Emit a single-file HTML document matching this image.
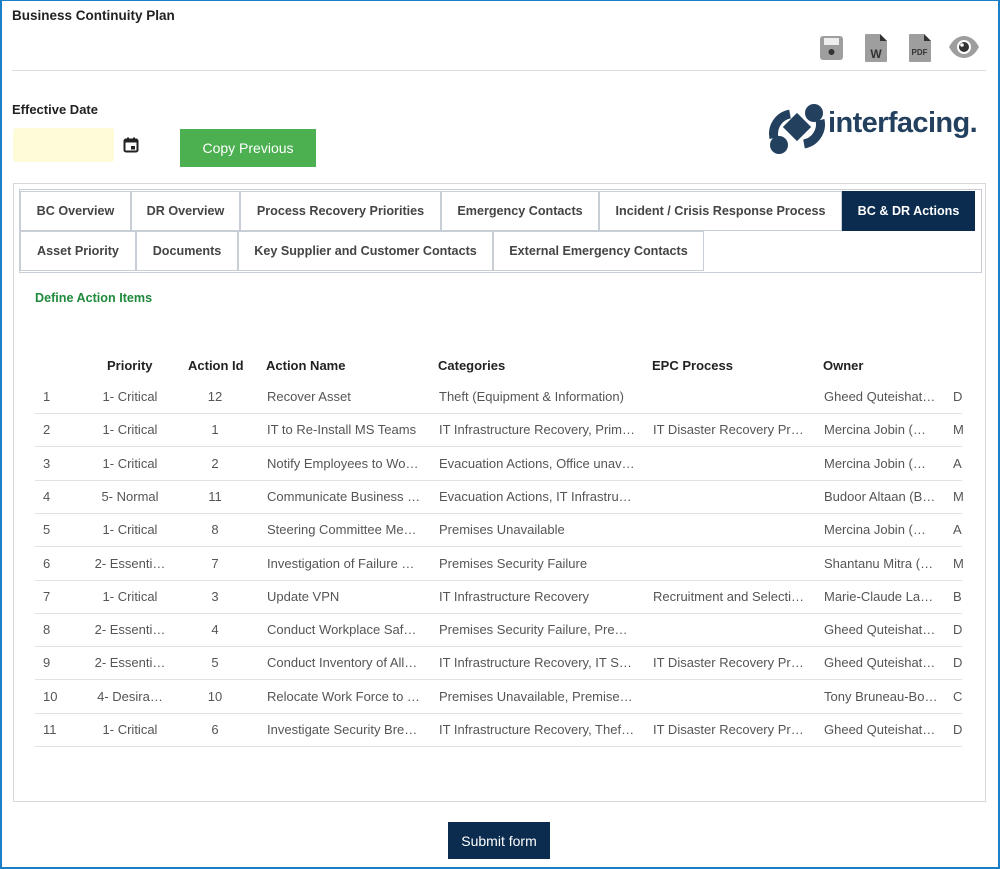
<!DOCTYPE html>
<html><head><style>
*{box-sizing:border-box;margin:0;padding:0}
body{width:1000px;height:869px;background:#fff;font-family:"Liberation Sans",sans-serif;position:relative;overflow:hidden}
.frame{position:absolute;left:0;top:0;width:1000px;height:869px;border:2px solid #1a7fc7;border-top:1px solid #1a7fc7}
.a{position:absolute}
.title{left:12px;top:8px;font-size:13.5px;font-weight:bold;color:#222}
.hr{left:12px;top:70px;width:974px;height:1px;background:#ddd}
.tab{position:absolute;height:40px;border:1px solid #c8ced6;font-size:12.6px;font-weight:bold;color:#444;display:flex;align-items:center;justify-content:center;background:#fff;white-space:nowrap}
.tab.act{background:#0b2c4f;color:#fff;border-color:#0b2c4f}
.t{position:absolute;font-size:13px;color:#555;white-space:nowrap}
.h{position:absolute;font-size:13px;color:#222;font-weight:bold;white-space:nowrap}
.line{position:absolute;left:35px;width:927px;height:1px;background:#e2e2e2}
</style></head><body>
<div class="frame"></div>
<div class="a title">Business Continuity Plan</div>
<svg class="a" style="left:819px;top:34px" width="26" height="28" viewBox="0 0 26 28"><rect x="1" y="2" width="23" height="24" rx="3" fill="#9e9e9e"/><rect x="5" y="4" width="15" height="7" fill="#eee"/><circle cx="12.5" cy="18" r="3" fill="#333"/></svg>
<svg class="a" style="left:864px;top:33px" width="24" height="30" viewBox="0 0 24 30"><path d="M2 1h14l7 7v20a1 1 0 0 1-1 1H2a1 1 0 0 1-1-1V2a1 1 0 0 1 1-1z" fill="#9e9e9e"/><path d="M16 1v7h7z" fill="#333"/><text x="12" y="25" font-size="12" font-weight="bold" text-anchor="middle" fill="#333" font-family="Liberation Sans">W</text></svg>
<svg class="a" style="left:908px;top:33px" width="24" height="30" viewBox="0 0 24 30"><path d="M2 1h14l7 7v20a1 1 0 0 1-1 1H2a1 1 0 0 1-1-1V2a1 1 0 0 1 1-1z" fill="#9e9e9e"/><path d="M16 1v7h7z" fill="#333"/><text x="11.5" y="22" font-size="8" font-weight="bold" text-anchor="middle" fill="#333" font-family="Liberation Sans">PDF</text></svg>
<svg class="a" style="left:948px;top:34px" width="32" height="26" viewBox="0 0 32 26"><path d="M1 13C5 5 11 2 16 2s11 3 15 11c-4 8-10 11-15 11S5 21 1 13z" fill="#9e9e9e"/><circle cx="16" cy="13" r="7" fill="#fff"/><circle cx="16" cy="13" r="5" fill="#333"/><circle cx="14" cy="11" r="1.8" fill="#fff"/></svg>
<div class="a hr"></div>
<div class="a" style="left:12px;top:102px;font-size:13px;font-weight:bold;color:#222">Effective Date</div>
<div class="a" style="left:13px;top:128px;width:101px;height:34px;background:#fefbd8;border-radius:3px"></div>
<svg class="a" style="left:123px;top:137px" width="16" height="16" viewBox="0 0 16 16"><rect x="1.5" y="2.5" width="13" height="12" rx="1.5" fill="none" stroke="#222" stroke-width="2"/><rect x="1.5" y="2.5" width="13" height="3" fill="#222"/><rect x="8" y="9" width="4" height="3.5" fill="#222"/><rect x="4" y="0.5" width="2" height="3" fill="#222"/><rect x="10" y="0.5" width="2" height="3" fill="#222"/></svg>
<div class="a" style="left:180px;top:129px;width:136px;height:38px;background:#4caf50;color:#fff;font-size:14px;display:flex;align-items:center;justify-content:center">Copy Previous</div>
<svg class="a" style="left:768px;top:100px" width="60" height="56" viewBox="0 0 60 56"><path d="M22 14 A20 20 0 0 0 6 38" fill="none" stroke="#23415f" stroke-width="9"/><path d="M36 44 A20 20 0 0 0 52 20" fill="none" stroke="#23415f" stroke-width="9"/><rect x="19" y="17" width="20" height="20" transform="rotate(45 29 27)" fill="#23415f"/><circle cx="46" cy="13" r="9" fill="#23415f"/><circle cx="11" cy="45" r="9" fill="#23415f"/></svg>
<div class="a" style="left:828px;top:107px;font-size:29px;font-weight:bold;color:#23415f;letter-spacing:-0.6px">interfacing.</div>
<div class="a" style="left:13px;top:183px;width:973px;height:619px;border:1px solid #d4d8dd"></div>
<div class="a" style="left:19px;top:189px;width:963px;height:84px;border:1px solid #c8ced6"></div>
<div class="tab" style="left:20px;top:191px;width:111px">BC Overview</div>
<div class="tab" style="left:131px;top:191px;width:109px">DR Overview</div>
<div class="tab" style="left:240px;top:191px;width:201px">Process Recovery Priorities</div>
<div class="tab" style="left:441px;top:191px;width:158px">Emergency Contacts</div>
<div class="tab" style="left:599px;top:191px;width:243px">Incident / Crisis Response Process</div>
<div class="tab act" style="left:842px;top:191px;width:133px">BC &amp; DR Actions</div>
<div class="tab" style="left:20px;top:231px;width:116px">Asset Priority</div>
<div class="tab" style="left:136px;top:231px;width:102px">Documents</div>
<div class="tab" style="left:238px;top:231px;width:255px">Key Supplier and Customer Contacts</div>
<div class="tab" style="left:493px;top:231px;width:211px">External Emergency Contacts</div>
<div class="a" style="left:35px;top:291px;font-size:12.6px;font-weight:bold;color:#1e8a3c">Define Action Items</div>
<div class="h" style="left:107px;top:358px">Priority</div>
<div class="h" style="left:188px;top:358px">Action Id</div>
<div class="h" style="left:266px;top:358px">Action Name</div>
<div class="h" style="left:438px;top:358px">Categories</div>
<div class="h" style="left:652px;top:358px">EPC Process</div>
<div class="h" style="left:823px;top:358px">Owner</div>
<div id="rows"></div>
<script>
var d=[["1","1- Critical","12","Recover Asset","Theft (Equipment & Information)","","Gheed Quteishat…","D"],
["2","1- Critical","1","IT to Re-Install MS Teams","IT Infrastructure Recovery, Prim…","IT Disaster Recovery Pr…","Mercina Jobin (…","M"],
["3","1- Critical","2","Notify Employees to Wo…","Evacuation Actions, Office unav…","","Mercina Jobin (…","A"],
["4","5- Normal","11","Communicate Business …","Evacuation Actions, IT Infrastru…","","Budoor Altaan (B…","M"],
["5","1- Critical","8","Steering Committee Me…","Premises Unavailable","","Mercina Jobin (…","A"],
["6","2- Essenti…","7","Investigation of Failure …","Premises Security Failure","","Shantanu Mitra (…","M"],
["7","1- Critical","3","Update VPN","IT Infrastructure Recovery","Recruitment and Selecti…","Marie-Claude La…","B"],
["8","2- Essenti…","4","Conduct Workplace Saf…","Premises Security Failure, Pre…","","Gheed Quteishat…","D"],
["9","2- Essenti…","5","Conduct Inventory of All…","IT Infrastructure Recovery, IT S…","IT Disaster Recovery Pr…","Gheed Quteishat…","D"],
["10","4- Desira…","10","Relocate Work Force to …","Premises Unavailable, Premise…","","Tony Bruneau-Bo…","C"],
["11","1- Critical","6","Investigate Security Bre…","IT Infrastructure Recovery, Thef…","IT Disaster Recovery Pr…","Gheed Quteishat…","D"]];
var h="";
d.forEach(function(r,i){var y=389+i*33.3;
h+='<div class="t" style="left:43px;top:'+y+'px">'+r[0]+'</div>';
h+='<div class="t" style="left:88px;width:84px;text-align:center;top:'+y+'px">'+r[1]+'</div>';
h+='<div class="t" style="left:172px;width:86px;text-align:center;top:'+y+'px">'+r[2]+'</div>';
h+='<div class="t" style="left:267px;top:'+y+'px">'+r[3]+'</div>';
h+='<div class="t" style="left:439px;top:'+y+'px">'+r[4]+'</div>';
h+='<div class="t" style="left:653px;top:'+y+'px">'+r[5]+'</div>';
h+='<div class="t" style="left:824px;top:'+y+'px">'+r[6]+'</div>';
h+='<div class="t" style="left:953px;top:'+y+'px">'+r[7]+'</div>';
h+='<div class="line" style="top:'+Math.round(413+i*33.3)+'px"></div>';});
document.getElementById("rows").innerHTML=h;
</script>
<div class="a" style="left:448px;top:822px;width:102px;height:37px;background:#0b2c4f;color:#fff;font-size:14px;display:flex;align-items:center;justify-content:center">Submit form</div>
</body></html>
